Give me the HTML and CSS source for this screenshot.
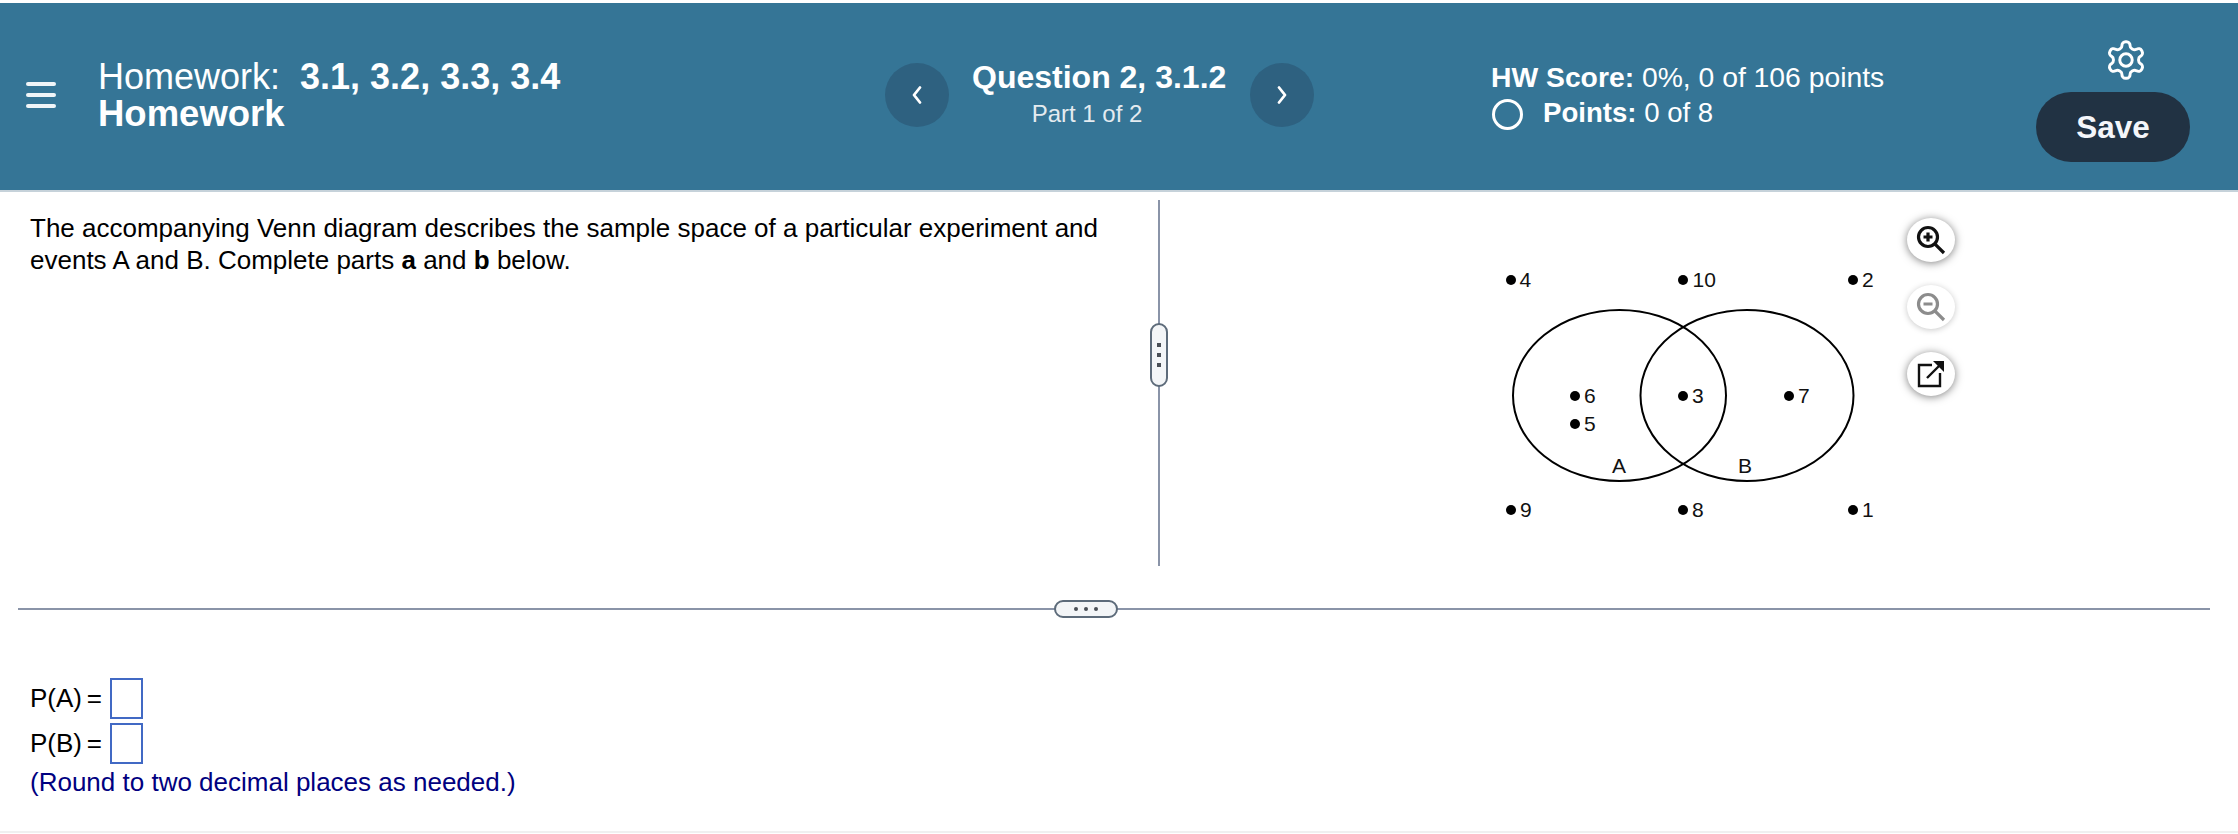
FILE: index.html
```html
<!DOCTYPE html>
<html lang="en">
<head>
<meta charset="utf-8">
<title>Homework</title>
<link rel="stylesheet" href="styles.css">
</head>
<body>
<header class="topbar">
  <button class="menu" aria-label="Menu"><span></span><span></span><span></span></button>
  <div class="title">
    <div>Homework:&nbsp; <b>3.1, 3.2, 3.3, 3.4</b></div>
    <div class="title-sub"><b>Homework</b></div>
  </div>
  <button class="nav" aria-label="Previous">
    <svg viewBox="0 0 12 20" class="chev"><path d="M9 2.5 3 10l6 7.5"/></svg>
  </button>
  <div class="question">
    <div class="qname">Question 2, 3.1.2</div>
    <div class="qpart">Part 1 of 2</div>
  </div>
  <button class="nav" aria-label="Next">
    <svg viewBox="0 0 12 20" class="chev"><path d="M3 2.5 9 10l-6 7.5"/></svg>
  </button>
  <div class="score">
    <div><b>HW Score:</b> 0%, 0 of 106 points</div>
    <div class="points"><span class="ring"></span><span><b>Points:</b> 0 of 8</span></div>
  </div>
  <div class="actions">
    <svg class="gear" viewBox="0 0 24 24"><path d="M12.22 2h-.44a2 2 0 0 0-2 2v.18a2 2 0 0 1-1 1.73l-.43.25a2 2 0 0 1-2 0l-.15-.08a2 2 0 0 0-2.73.73l-.22.38a2 2 0 0 0 .73 2.73l.15.1a2 2 0 0 1 1 1.72v.51a2 2 0 0 1-1 1.74l-.15.09a2 2 0 0 0-.73 2.73l.22.38a2 2 0 0 0 2.73.73l.15-.08a2 2 0 0 1 2 0l.43.25a2 2 0 0 1 1 1.73V20a2 2 0 0 0 2 2h.44a2 2 0 0 0 2-2v-.18a2 2 0 0 1 1-1.73l.43-.25a2 2 0 0 1 2 0l.15.08a2 2 0 0 0 2.73-.73l.22-.39a2 2 0 0 0-.73-2.73l-.15-.08a2 2 0 0 1-1-1.74v-.5a2 2 0 0 1 1-1.74l.15-.09a2 2 0 0 0 .73-2.73l-.22-.38a2 2 0 0 0-2.73-.73l-.15.08a2 2 0 0 1-2 0l-.43-.25a2 2 0 0 1-1-1.73V4a2 2 0 0 0-2-2z"/><circle cx="12" cy="12" r="3.4"/></svg>
    <button class="save">Save</button>
  </div>
</header>

<main>
  <section class="panes">
    <div class="prompt">
      <div>The accompanying Venn diagram describes the sample space of a particular experiment and</div>
      <div class="prompt-line"><span>events A and B. Complete parts</span> <b>a</b> <span>and</span> <b>b</b> <span>below.</span></div>
    </div>
    <div class="vrule"><span class="grip grip-v"><i></i><i></i><i></i></span></div>
    <div class="figure">
      <svg class="venn" viewBox="1480 260 400 270" width="400" height="270">
        <ellipse cx="1620.5" cy="395.5" rx="106.5" ry="85.5"/>
        <ellipse cx="1748" cy="395.5" rx="106.5" ry="85.5"/>
        <g class="dots">
          <circle cx="1512" cy="280" r="5"/><circle cx="1684" cy="280" r="5"/><circle cx="1854" cy="280" r="5"/>
          <circle cx="1576" cy="396" r="5"/><circle cx="1576" cy="424" r="5"/><circle cx="1684" cy="396" r="5"/>
          <circle cx="1790" cy="396" r="5"/><circle cx="1512" cy="510" r="5"/><circle cx="1684" cy="510" r="5"/>
          <circle cx="1854" cy="510" r="5"/>
        </g>
        <g class="labels">
          <text x="1520.5" y="287">4</text><text x="1693.5" y="287">10</text><text x="1863" y="287">2</text>
          <text x="1585" y="403">6</text><text x="1585" y="431">5</text><text x="1693" y="403">3</text>
          <text x="1799" y="403">7</text><text x="1521" y="517">9</text><text x="1693" y="517">8</text>
          <text x="1863" y="517">1</text>
          <text x="1613" y="473">A</text><text x="1739" y="473">B</text>
        </g>
      </svg>
      <div class="tools">
        <button class="tool" aria-label="Zoom in">
          <svg viewBox="0 0 32 32"><circle cx="13" cy="13" r="9.5"/><path d="M19.8 19.8 29 29M13 8.5v9M8.5 13h9"/></svg>
        </button>
        <button class="tool tool-off" aria-label="Zoom out">
          <svg viewBox="0 0 32 32"><circle cx="13" cy="13" r="9.5"/><path d="M19.8 19.8 29 29M8.5 13h9"/></svg>
        </button>
        <button class="tool" aria-label="Open in new window">
          <svg viewBox="0 0 32 32"><path class="thin" d="M17 7H4v21h21V15"/><path class="thin" d="M12 20 26 6"/><path class="head" d="M18 3h11v11z"/></svg>
        </button>
      </div>
    </div>
  </section>

  <div class="hrule"><span class="grip grip-h"><i></i><i></i><i></i></span></div>

  <section class="answers">
    <div class="row"><span class="expr">P(A) =</span><span class="box"></span></div>
    <div class="row row-b"><span class="expr">P(B) =</span><span class="box"></span></div>
    <div class="hint">(Round to two decimal places as needed.)</div>
  </section>
</main>
</body>
</html>
```
FILE: styles.css
```css
* { box-sizing: border-box; }
html, body { margin: 0; padding: 0; }
body {
  width: 2238px;
  height: 834px;
  overflow: hidden;
  background: #fff;
  color: #000;
  font-family: "Liberation Sans", Arial, sans-serif;
}
button { font-family: inherit; border: 0; padding: 0; cursor: pointer; }

/* Header */
.topbar {
  margin-top: 3px;
  height: 189px;
  padding-bottom: 3px;
  display: flex;
  align-items: center;
  background: #357596;
  border-bottom: 2px solid #c6d2da;
  color: #fff;
}
.menu {
  width: 30px;
  height: 26px;
  margin-left: 26px;
  display: flex;
  flex-direction: column;
  justify-content: space-between;
  background: none;
}
.menu span { display: block; height: 4px; width: 100%; background: #f0f5f8; border-radius: 2px; }
.title {
  width: 829px;
  padding-left: 42px;
  font-size: 36px;
  line-height: 37px;
}
.title-sub { font-size: 36.5px; }
.nav {
  flex: none;
  width: 64px;
  height: 64px;
  border-radius: 50%;
  background: #2e6180;
  display: flex;
  align-items: center;
  justify-content: center;
}
.chev { width: 12px; height: 20px; }
.chev path { fill: none; stroke: #fff; stroke-width: 2.8; stroke-linecap: round; stroke-linejoin: round; }
.question { width: 301px; padding-left: 23px; }
.qname { font-size: 32px; font-weight: 700; line-height: 37px; width: 256px; }
.qpart { font-size: 24px; line-height: 36px; width: 230px; text-align: center; color: #e4ebf0; }
.score { margin-left: 177px; width: 545px; font-size: 28.3px; line-height: 36px; }
.points { display: flex; align-items: center; gap: 20px; font-size: 27.6px; }
.ring { width: 31px; height: 31px; margin: 3px 0 0 1px; border: 3.5px solid #fff; border-radius: 50%; }
.actions {
  width: 154px;
  align-self: flex-start;
  padding-top: 35px;
  display: flex;
  flex-direction: column;
}
.gear { width: 44px; height: 44px; margin: 0 0 10px 68px; display: block; fill: none; stroke: #fff; stroke-width: 1.6; }
.save {
  width: 154px;
  height: 70px;
  border-radius: 35px;
  background: #213243;
  color: #f4f6fa;
  font-size: 31.5px;
  font-weight: 700;
}

/* Split panes */
.panes { display: flex; height: 408px; }
.prompt {
  width: 1158px;
  padding: 20px 50px 0 30px;
  font-size: 26px;
  line-height: 32px;
}
.vrule {
  position: relative;
  width: 2px;
  height: 366px;
  margin-top: 8px;
  background: #8a94a8;
}
.grip {
  position: absolute;
  display: flex;
  align-items: center;
  justify-content: center;
  gap: 6px;
  background: #f3f5f7;
  border: 2px solid #5d6b7a;
  border-radius: 9px;
}
.grip i { width: 4px; height: 4px; background: #4a4f56; }
.grip-v { flex-direction: column; width: 18px; height: 64px; left: -8px; top: 123px; }
.grip-h { width: 64px; height: 18px; left: 1036px; top: -8px; }
.grip-h i { border-radius: 50%; }
.figure { display: flex; align-items: flex-start; }
.venn { margin: 68px 0 0 319px; display: block; }
.venn ellipse { fill: none; stroke: #000; stroke-width: 2; }
.dots circle { fill: #000; }
.labels text { font-size: 21px; fill: #111; }
.tools { margin: 26px 0 0 28px; display: flex; flex-direction: column; gap: 23px; }
.tool {
  width: 48px;
  height: 44px;
  border-radius: 50%;
  background: #fff;
  box-shadow: 0 1px 8px rgba(0, 0, 0, .5);
  display: flex;
  align-items: center;
  justify-content: center;
}
.tool svg { width: 32px; height: 32px; fill: none; stroke: #111; stroke-width: 3.2; }
.tool .thin { stroke-width: 2.4; }
.tool .head { fill: #111; stroke: none; }
.tool-off { box-shadow: 0 1px 6px rgba(0, 0, 0, .22); }
.tool-off svg { stroke: #8c8c8c; }

/* Horizontal rule */
.hrule {
  position: relative;
  margin: 8px 0 0 18px;
  width: 2192px;
  height: 2px;
  background: #8a94a8;
}

/* Answers */
main { border-bottom: 2px solid #f0f0f0; height: 641px; }
.answers { padding: 68px 0 0 30px; font-size: 26px; }
.row { display: flex; align-items: center; gap: 8px; height: 41px; }
.row-b { margin-top: 4px; }
.expr { word-spacing: -2.5px; }
.box { width: 33px; height: 41px; border: 2px solid #4169c4; background: #fff; }
.hint { color: #000080; line-height: 32px; margin-top: 2px; }
```
